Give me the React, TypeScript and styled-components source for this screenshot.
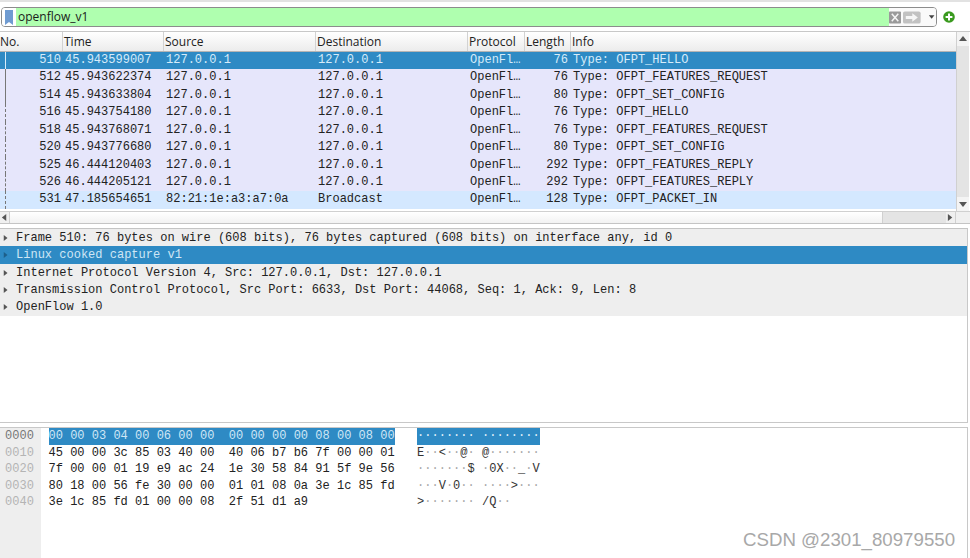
import React from "react";
import styled, { createGlobalStyle } from "styled-components";

const Global = createGlobalStyle`
  html, body { margin: 0; padding: 0; background: #fff; }
  #root { width: 970px; height: 558px; overflow: hidden; }
`;
const Page = styled.div`
  position: relative; width: 970px; height: 558px; display: flex; flex-direction: column;
  background: #fff; color: #222; font-family: "Liberation Mono", monospace; font-size: 12.03px;
  border-top: 2px solid #e2e2e2; box-sizing: border-box; overflow: hidden;
`;
const FilterRow = styled.div`
  display: flex; align-items: center; height: 27px; padding: 3px 0 0 1px; box-sizing: border-box; flex: none; gap: 3px;
`;
const FilterBox = styled.div`
  width: 936px; height: 20px; box-sizing: border-box; border: 1.5px solid #8c8c8c; border-radius: 4px;
  display: flex; align-items: stretch; background: #f4f4f4; overflow: hidden;
`;
const Bookmark = styled.div`
  width: 14px; background: #fff; display: flex; align-items: center; justify-content: center; flex: none;
`;
const FilterInput = styled.div`
  flex: 1; background: #afffaf; font: 12px/17px "Open Sans", "Noto Sans", sans-serif; color: #1a1a1a; padding-left: 2px;
`;
const FilterControls = styled.div`
  width: 47px; flex: none; display: flex; align-items: center; gap: 2px; background: #fafafa;
`;
const Packets = styled.div`
  display: grid; grid-template-columns: 956px 13px; height: 179px; flex: none; margin-top: 2px;
  border-top: 1px solid #c8c8c8;
`;
const TableCol = styled.div`
  display: flex; flex-direction: column; min-width: 0;
`;
const cols = "63px 101px 152px 152px 57px 46px 1fr";
const HeadRow = styled.div`
  display: grid; grid-template-columns: ${cols}; height: 20px; flex: none; box-sizing: border-box;
  background: linear-gradient(#fff, #ececec); border-bottom: 1px solid #b4b4b4;
  font: 12px/19px "Open Sans", "Noto Sans", sans-serif; color: #222;
`;
const HeadCell = styled.div`
  padding-left: 1px; border-right: 1px solid #d2d2d2; overflow: hidden; white-space: nowrap;
  &:first-child { padding-left: 0; }
  &:last-child { border-right: 0; }
`;
const Row = styled.div<{ $bg: string; $fg: string }>`
  display: grid; grid-template-columns: ${cols}; height: 17.43px; line-height: 17.43px; flex: none;
  background: ${p => p.$bg}; color: ${p => p.$fg}; white-space: pre;
`;
const Cell = styled.div<{ $right?: boolean }>`
  padding: 0 ${p => (p.$right ? "3px" : "2px")} 0 2px; overflow: hidden; text-align: ${p => (p.$right ? "right" : "left")};
`;
const NoCell = styled(Cell)`
  position: relative;
  padding-right: 2px;
`;
const Gutter = styled.span<{ $dash?: boolean; $light?: boolean }>`
  position: absolute; left: 5px; top: 0; bottom: 0; width: 0;
  border-left: 1px ${p => (p.$dash ? "dashed" : "solid")} ${p => (p.$light ? "#d6ecfa" : "#777")};
`;
const VScroll = styled.div`
  background: #e4e4e4; border-left: 1px solid #d0d0d0; display: flex; flex-direction: column; justify-content: space-between;
`;
const ScrollBtn = styled.div`
  height: 14px; background: #f4f4f4; display: flex; align-items: center; justify-content: center; flex: none;
`;
const HScroll = styled.div`
  display: flex; height: 13px; flex: none; box-sizing: border-box; border-top: 1px solid #d0d0d0; border-bottom: 1px solid #c4c4c4; background: #e4e4e4;
`;
const HButton = styled.div`
  width: 9px; flex: none; display: flex; align-items: center; justify-content: center; background: #f0f0f0;
`;
const HThumb = styled.div`
  width: 872px; flex: none; background: linear-gradient(#fff, #f2f2f2); border-right: 1px solid #d0d0d0; border-left: 1px solid #d0d0d0;
`;
const HTrack = styled.div`flex: 1;`;
const Corner = styled.div`
  width: 14px; flex: none; background: #f0f0f0; border-left: 1px solid #d0d0d0;
`;
const Tree = styled.div`
  height: 195px; width: 968px; flex: none; margin-top: 4px; box-sizing: border-box; border: 1px solid #c8c8c8; background: #fff;
  display: flex; flex-direction: column; border-left: 0; border-top-color: #c4c4c4;
`;
const TreeRow = styled.div<{ $sel?: boolean }>`
  display: flex; align-items: center; height: 17.45px; flex: none; white-space: pre;
  background: ${p => (p.$sel ? "#2e8ac4" : "#eeeeee")}; color: ${p => (p.$sel ? "#cfe6f5" : "#222")};
`;
const Arrow = styled.span`
  width: 16px; flex: none; padding-left: 3px; box-sizing: border-box; display: flex; align-items: center;
`;
const Hex = styled.div`
  flex: 1; display: grid; grid-template-columns: 41px 1fr; margin-top: 4px; width: 968px;
  border-top: 1px solid #c8c8c8; border-right: 1px solid #c8c8c8; box-sizing: border-box; line-height: 16.55px;
`;
const Offsets = styled.div`
  background: #eeeeee; color: #b0b0b0; padding-left: 5px;
`;
const OffsetLine = styled.div<{ $active?: boolean }>`
  height: 16.55px; color: ${p => (p.$active ? "#777" : "#b4b4b4")};
`;
const Dump = styled.div`
  padding-left: 7.5px; display: flex; flex-direction: column;
`;
const DumpLine = styled.div`
  display: flex; height: 16.55px; white-space: pre;
`;
const HexText = styled.span<{ $sel?: boolean }>`
  width: 346.5px; flex: none; background: ${p => (p.$sel ? "#2e8ac4" : "transparent")}; color: ${p => (p.$sel ? "#cfe6f5" : "#222")};
`;
const AsciiText = styled.span<{ $sel?: boolean }>`
  margin-left: 22px; background: ${p => (p.$sel ? "#2e8ac4" : "transparent")}; color: ${p => (p.$sel ? "#cfe6f5" : "#333")};
`;
const Dot = styled.span<{ $sel?: boolean }>`
  color: ${p => (p.$sel ? "#e4f1fa" : "#a8a8a8")};
`;
const Watermark = styled.div`
  position: absolute; left: 743px; top: 527px; font: 18.68px/22px "Liberation Sans", Arial, sans-serif; color: #a8a8a8;
`;

const rows = [
  ["510", "45.943599007", "127.0.0.1", "127.0.0.1", "OpenFl…", "76", "Type: OFPT_HELLO"],
  ["512", "45.943622374", "127.0.0.1", "127.0.0.1", "OpenFl…", "76", "Type: OFPT_FEATURES_REQUEST"],
  ["514", "45.943633804", "127.0.0.1", "127.0.0.1", "OpenFl…", "80", "Type: OFPT_SET_CONFIG"],
  ["516", "45.943754180", "127.0.0.1", "127.0.0.1", "OpenFl…", "76", "Type: OFPT_HELLO"],
  ["518", "45.943768071", "127.0.0.1", "127.0.0.1", "OpenFl…", "76", "Type: OFPT_FEATURES_REQUEST"],
  ["520", "45.943776680", "127.0.0.1", "127.0.0.1", "OpenFl…", "80", "Type: OFPT_SET_CONFIG"],
  ["525", "46.444120403", "127.0.0.1", "127.0.0.1", "OpenFl…", "292", "Type: OFPT_FEATURES_REPLY"],
  ["526", "46.444205121", "127.0.0.1", "127.0.0.1", "OpenFl…", "292", "Type: OFPT_FEATURES_REPLY"],
  ["531", "47.185654651", "82:21:1e:a3:a7:0a", "Broadcast", "OpenFl…", "128", "Type: OFPT_PACKET_IN"],
];
const heads = ["No.", "Time", "Source", "Destination", "Protocol", "Length", "Info"];
const tree = [
  "Frame 510: 76 bytes on wire (608 bits), 76 bytes captured (608 bits) on interface any, id 0",
  "Linux cooked capture v1",
  "Internet Protocol Version 4, Src: 127.0.0.1, Dst: 127.0.0.1",
  "Transmission Control Protocol, Src Port: 6633, Dst Port: 44068, Seq: 1, Ack: 9, Len: 8",
  "OpenFlow 1.0",
];
const hex = [
  ["0000", "00 00 03 04 00 06 00 00  00 00 00 00 08 00 08 00", "········ ········"],
  ["0010", "45 00 00 3c 85 03 40 00  40 06 b7 b6 7f 00 00 01", "E··<··@· @·······"],
  ["0020", "7f 00 00 01 19 e9 ac 24  1e 30 58 84 91 5f 9e 56", "·······$ ·0X··_·V"],
  ["0030", "80 18 00 56 fe 30 00 00  01 01 08 0a 3e 1c 85 fd", "···V·0·· ····>···"],
  ["0040", "3e 1c 85 fd 01 00 00 08  2f 51 d1 a9", ">······· /Q··"],
];

const Tri = ({ dir, color = "#555", size = 8 }: { dir: "r" | "u" | "d" | "l"; color?: string; size?: number }) => {
  const pts = { r: "1,0 6,4 1,8", l: "6,0 1,4 6,8", u: "0,6 4,1 8,6", d: "0,2 8,2 4,7" }[dir];
  return (
    <svg width={size} height={size} viewBox="0 0 8 8"><polygon points={pts} fill={color} /></svg>
  );
};

export default function App() {
  return (
    <Page>
      <Global />
      <FilterRow>
        <FilterBox>
          <Bookmark>
            <svg width="8" height="15" viewBox="0 0 8 15"><path d="M0 0H8V15L4 12L0 15Z" fill="#6f9bd1" /></svg>
          </Bookmark>
          <FilterInput>openflow_v1</FilterInput>
          <FilterControls>
            <svg width="13" height="13" viewBox="0 0 13 13">
              <rect width="13" height="13" rx="1" fill="#9a9a9a" />
              <path d="M3 2.5L10 10.5M10 2.5L3 10.5" stroke="#f4f4f4" strokeWidth="1.6" />
            </svg>
            <svg width="19" height="13" viewBox="0 0 19 13">
              <rect width="19" height="13" rx="2" fill="#c2c2c2" />
              <path d="M3 5H10V2L16 6.5L10 11V8H3Z" fill="#f6f6f6" />
            </svg>
            <svg width="10" height="8" viewBox="0 0 10 8" style={{ marginLeft: 4 }}><polygon points="2,2 8,2 5,6" fill="#444" /></svg>
          </FilterControls>
        </FilterBox>
        <svg width="12" height="12" viewBox="0 0 12 12" style={{ marginLeft: 3 }}>
          <circle cx="6" cy="6" r="5.8" fill="#3a9a1e" />
          <path d="M6 2.6V9.4M2.6 6H9.4" stroke="#fff" strokeWidth="2" />
        </svg>
      </FilterRow>
      <Packets>
        <TableCol>
          <HeadRow>
            {heads.map(h => <HeadCell key={h}>{h}</HeadCell>)}
          </HeadRow>
          {rows.map((r, i) => {
            const bg = i === 0 ? "#2e8ac4" : i === 8 ? "#d4e8ff" : "#e6e6fb";
            const fg = i === 0 ? "#d6ecfa" : "#222";
            return (
              <Row key={r[0]} $bg={bg} $fg={fg}>
                <NoCell $right>
                  <Gutter $dash={i > 2} $light={i === 0} />
                  {r[0]}
                </NoCell>
                <Cell>{r[1]}</Cell>
                <Cell>{r[2]}</Cell>
                <Cell>{r[3]}</Cell>
                <Cell>{r[4]}</Cell>
                <Cell $right>{r[5]}</Cell>
                <Cell>{r[6]}</Cell>
              </Row>
            );
          })}
        </TableCol>
        <VScroll>
          <ScrollBtn><Tri dir="u" /></ScrollBtn>
          <ScrollBtn><Tri dir="d" /></ScrollBtn>
        </VScroll>
      </Packets>
      <HScroll>
        <HButton><Tri dir="l" size={7} /></HButton>
        <HThumb />
        <HTrack />
        <HButton><Tri dir="r" size={7} /></HButton>
        <Corner />
      </HScroll>
      <Tree>
        {tree.map((t, i) => (
          <TreeRow key={t} $sel={i === 1}>
            <Arrow><Tri dir="r" size={6} color={i === 1 ? "#1d5f8a" : "#555"} /></Arrow>
            {t}
          </TreeRow>
        ))}
      </Tree>
      <Hex>
        <Offsets>
          {hex.map((h, i) => <OffsetLine key={h[0]} $active={i === 0}>{h[0]}</OffsetLine>)}
        </Offsets>
        <Dump>
          {hex.map((h, i) => (
            <DumpLine key={h[0]}>
              <HexText $sel={i === 0}>{h[1]}</HexText>
              <AsciiText $sel={i === 0}>
                {h[2].split("").map((c, j) => (c === "·" ? <Dot key={j} $sel={i === 0}>{c}</Dot> : c))}
              </AsciiText>
            </DumpLine>
          ))}
        </Dump>
      </Hex>
      <Watermark>CSDN @2301_80979550</Watermark>
    </Page>
  );
}
